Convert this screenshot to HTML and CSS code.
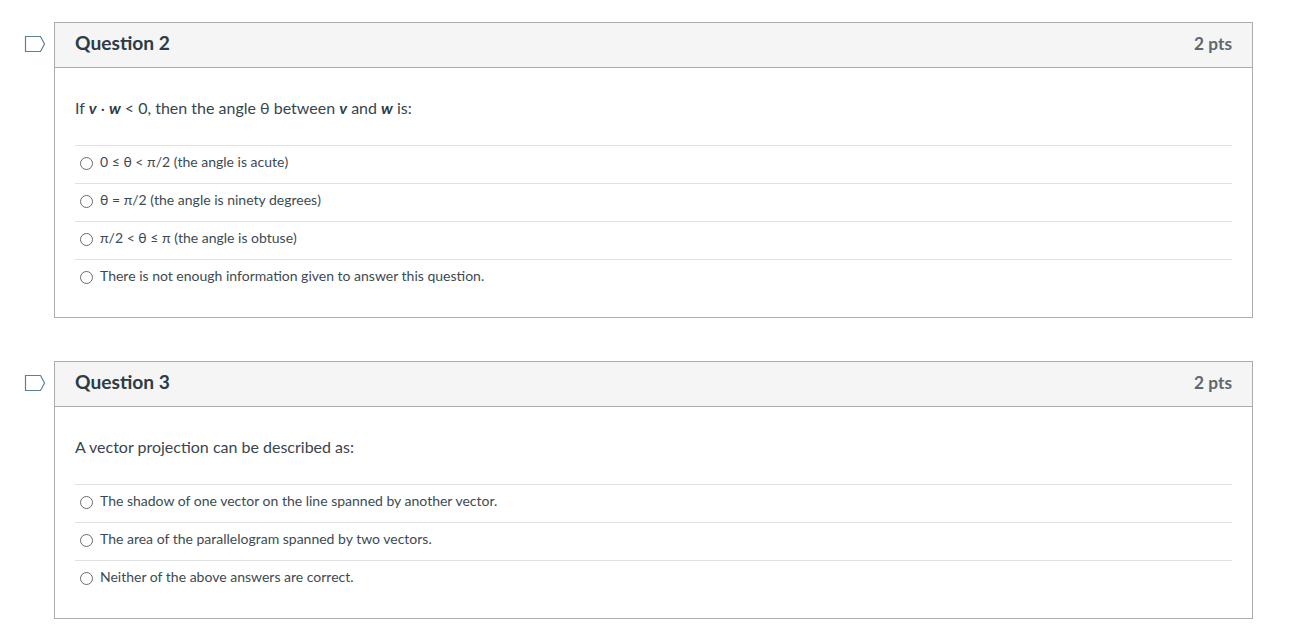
FILE: index.html
```html
<!DOCTYPE html>
<html lang="en">
<head>
<meta charset="utf-8">
<title>Quiz</title>
<link rel="stylesheet" href="styles.css">
</head>
<body>
<main class="quiz">
  <section class="question">
    <svg class="flag" width="22" height="18" viewBox="0 0 22 18" aria-hidden="true"><path d="M1.500 1.500H16.500L20.500 9L16.500 16.500H1.500Z"/></svg>
    <header class="head"><h2>Question 2</h2><span class="pts">2 pts</span></header>
    <div class="body">
      <p class="prompt">If <b><i>v</i></b> · <b><i>w</i></b> &lt; 0, then the angle θ between <b><i>v</i></b> and <b><i>w</i></b> is:</p>
      <ul class="answers">
        <li><span class="radio"></span>0 ≤ θ &lt; π/2 (the angle is acute)</li>
        <li><span class="radio"></span>θ = π/2 (the angle is ninety degrees)</li>
        <li><span class="radio"></span>π/2 &lt; θ ≤ π (the angle is obtuse)</li>
        <li><span class="radio"></span>There is not enough information given to answer this question.</li>
      </ul>
    </div>
  </section>
  <section class="question">
    <svg class="flag" width="22" height="18" viewBox="0 0 22 18" aria-hidden="true"><path d="M1.500 1.500H16.500L20.500 9L16.500 16.500H1.500Z"/></svg>
    <header class="head"><h2>Question 3</h2><span class="pts">2 pts</span></header>
    <div class="body">
      <p class="prompt">A vector projection can be described as:</p>
      <ul class="answers">
        <li><span class="radio"></span>The shadow of one vector on the line spanned by another vector.</li>
        <li><span class="radio"></span>The area of the parallelogram spanned by two vectors.</li>
        <li><span class="radio"></span>Neither of the above answers are correct.</li>
      </ul>
    </div>
  </section>
</main>
</body>
</html>
```

FILE: styles.css
```css
* { box-sizing: border-box; }
html, body { margin: 0; padding: 0; background: #fff; }
body { font-family: Lato, "Open Sans", sans-serif; color: #2d3b45; overflow: hidden; }
.quiz { display: flex; flex-direction: column; gap: 43px; width: 1199px; margin: 22px 0 0 54px; }
.question { position: relative; border: 1px solid #a9adb0; }
.flag { position: absolute; left: -31px; top: 12px; fill: #fff; stroke: #5b8199; stroke-width: 1.200; }
.head { display: flex; justify-content: space-between; align-items: center; height: 45px; padding: 0 20px 4px; background: #f5f5f5; border-bottom: 1px solid #a9adb0; }
.head h2 { margin: 0; font-size: 19.200px; font-weight: 700; line-height: 1; }
.pts { font-size: 17.300px; font-weight: 700; color: #5f686f; }
.body { padding: 0 20px 20px; }
.prompt { margin: 0; padding: 30px 0 27px; font-size: 16px; line-height: 20px; color: #38454e; }
.prompt b { color: #2d3b45; }
.answers { list-style: none; margin: 0; padding: 0; }
.answers li { display: flex; align-items: flex-start; height: 38px; border-top: 1px solid #dfe1e2; padding: 6px 0 0 5px; font-size: 14px; line-height: 20px; color: #3d4a53; }
.radio { width: 13px; height: 13px; margin: 5px 7px 0 0; border: 1px solid #6b6b6b; border-radius: 50%; background: #fff; flex: none; }
```
